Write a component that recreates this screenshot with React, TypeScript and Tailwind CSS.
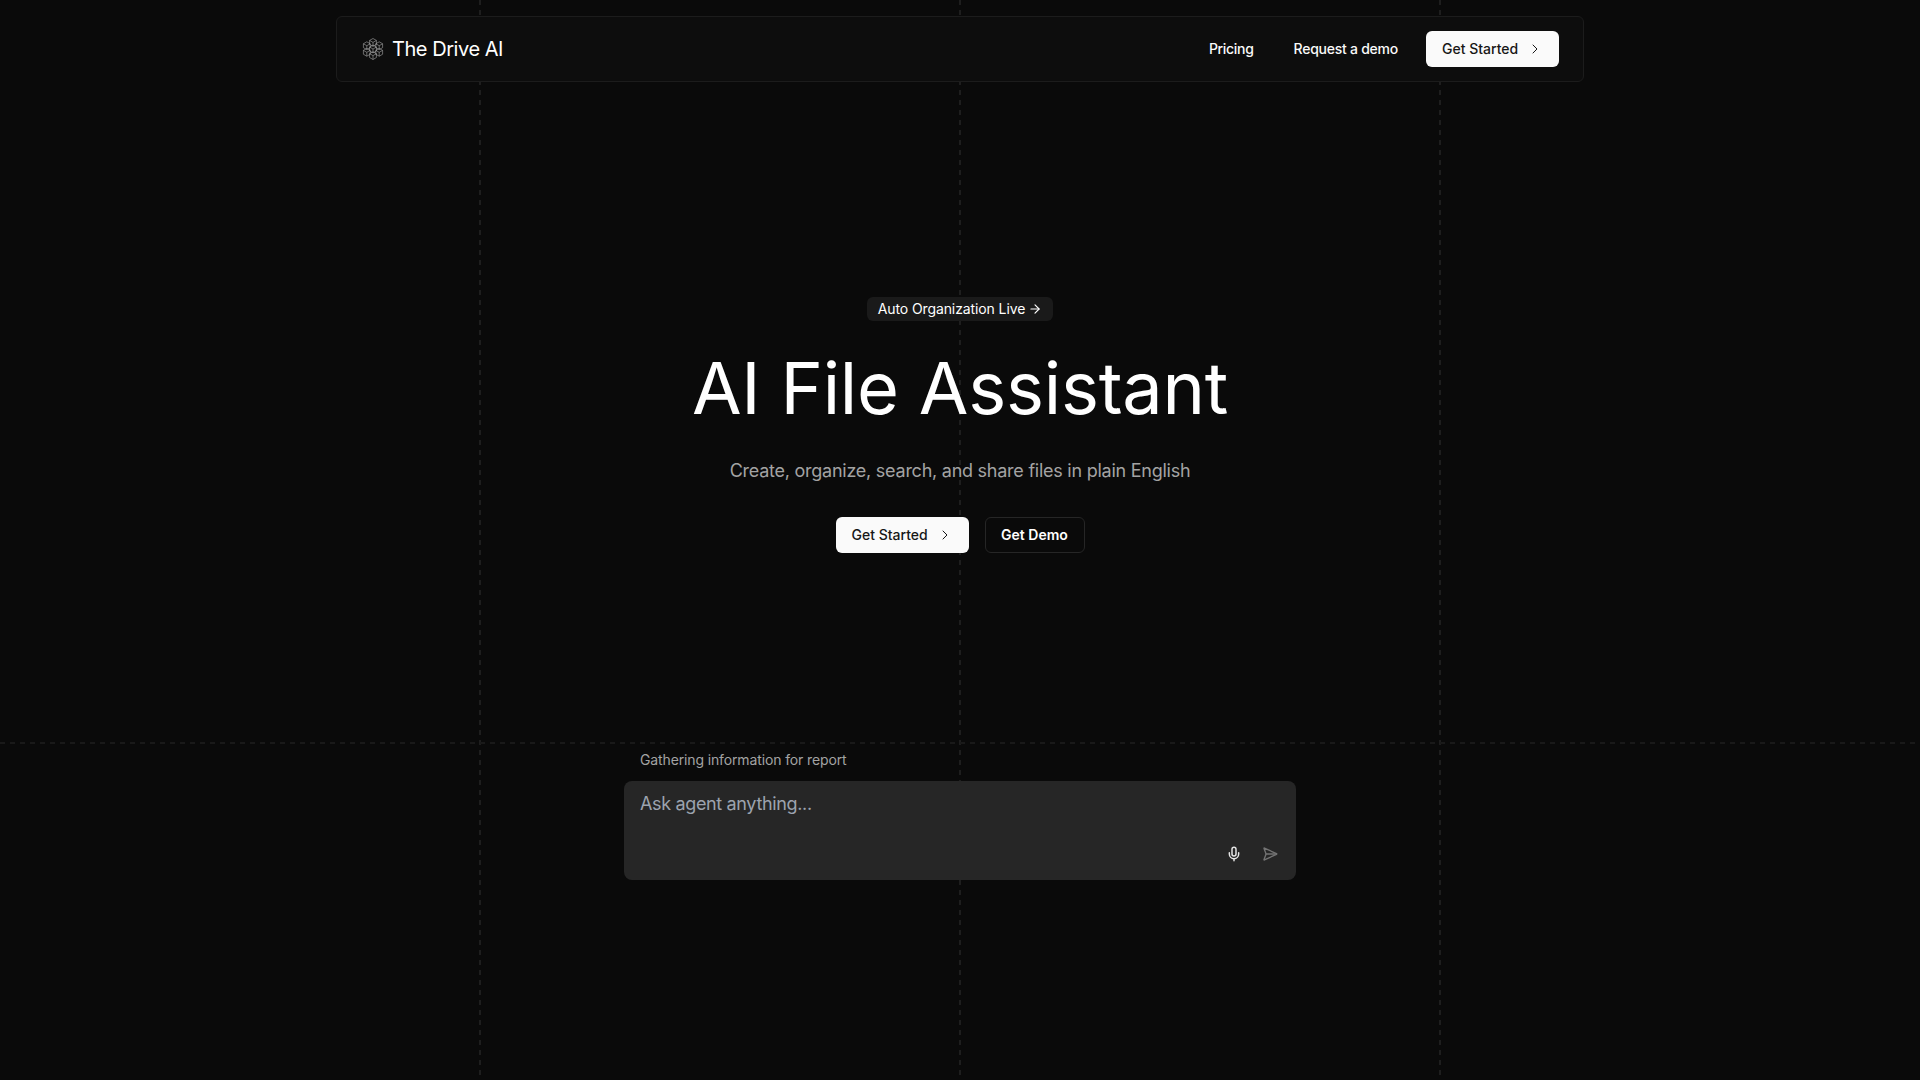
import { ArrowRight, ChevronRight, Mic, SendHorizontal } from "lucide-react";

function Logo() {
  const centers: [number, number][] = [[12, 12], [12, 5.4], [12, 18.6], [5.8, 8.7], [18.2, 8.7], [5.8, 15.3], [18.2, 15.3]];
  return (
    <svg width="24" height="24" viewBox="0 0 24 24" fill="none" stroke="#a8a8a8" strokeWidth="0.6">
      {centers.map(([x, y], i) => (
        <g key={i} transform={`translate(${x} ${y})`}>
          <polygon points="0,-3.9 3.4,-1.95 3.4,1.95 0,3.9 -3.4,1.95 -3.4,-1.95" />
          <path d="M0,0 L0,3.9 M0,0 L3.4,-1.95 M0,0 L-3.4,-1.95" />
        </g>
      ))}
    </svg>
  );
}

function PrimaryButton() {
  return (
    <button className="flex h-9 w-[133px] items-center justify-between rounded-md bg-[#fafafa] px-4 text-sm font-medium text-[#171717]">
      Get Started
      <ChevronRight size={16} strokeWidth={1.5} />
    </button>
  );
}

export default function App() {
  return (
    <div className="relative h-[1080px] w-full overflow-hidden bg-[#0a0a0a] font-['Inter',sans-serif] text-white">
      <div className="absolute left-[479px] top-0 h-full w-[2px] bg-[repeating-linear-gradient(to_bottom,#1e1e1e_0,#1e1e1e_5px,transparent_5px,transparent_10px)]" />
      <div className="absolute left-[959px] top-0 h-full w-[2px] bg-[repeating-linear-gradient(to_bottom,#1e1e1e_0,#1e1e1e_5px,transparent_5px,transparent_10px)]" />
      <div className="absolute left-[1439px] top-0 h-full w-[2px] bg-[repeating-linear-gradient(to_bottom,#1e1e1e_0,#1e1e1e_5px,transparent_5px,transparent_10px)]" />
      <div className="absolute left-0 top-[742px] h-[2px] w-full bg-[repeating-linear-gradient(to_right,#191919_0,#191919_5px,transparent_5px,transparent_10px)]" />

      <div className="relative flex flex-col items-center pt-4">
        <nav className="flex h-[66px] w-[1248px] items-center justify-between rounded-md border border-[#1c1c1c] bg-[#0d0d0d] pl-6 pr-6">
          <div className="flex items-center gap-[7px]">
            <Logo />
            <span className="text-xl font-normal tracking-[-0.45px]">The Drive AI</span>
          </div>
          <div className="flex items-center">
            <a className="mr-[40px] text-sm font-medium tracking-[-0.3px] text-[#fafafa]">Pricing</a>
            <a className="mr-7 text-sm font-medium tracking-[-0.25px] text-[#fafafa]">Request a demo</a>
            <PrimaryButton />
          </div>
        </nav>

        <div className="mt-[215px] flex h-6 w-[186px] items-center justify-center gap-[3px] rounded-md bg-[#1a1a1a] text-sm font-normal tracking-[-0.1px]">
          Auto Organization Live
          <ArrowRight size={14} strokeWidth={2} />
        </div>
        <h1 className="mt-[31px] text-[72px] leading-[72px] font-normal tracking-[-0.25px]">AI File Assistant</h1>
        <p className="mt-[33px] text-lg leading-7 tracking-[-0.25px] text-[#a3a3a3]">Create, organize, search, and share files in plain English</p>
        <div className="mt-[32px] flex gap-4">
          <PrimaryButton />
          <button className="h-9 w-[100px] rounded-md border border-[#262626] bg-[#0a0a0a] text-sm font-semibold">Get Demo</button>
        </div>

        <div className="mt-[189px] w-[672px]">
          <p className="px-4 pb-[3px] text-sm leading-[36px] tracking-[-0.13px] text-[#a3a3a3]">Gathering information for report</p>
          <div className="flex h-[99px] flex-col justify-between rounded-lg bg-[#262626] px-4 pb-[18px] pt-2">
            <p className="text-lg leading-[29px] tracking-[-0.35px] text-[#9ca3af]">Ask agent anything...</p>
            <div className="flex justify-end gap-5 pr-[2px] text-[#e5e5e5]">
              <Mic size={16} strokeWidth={2.2} />
              <SendHorizontal size={16} className="text-[#737373]" strokeWidth={2} />
            </div>
          </div>
        </div>
      </div>
    </div>
  );
}
